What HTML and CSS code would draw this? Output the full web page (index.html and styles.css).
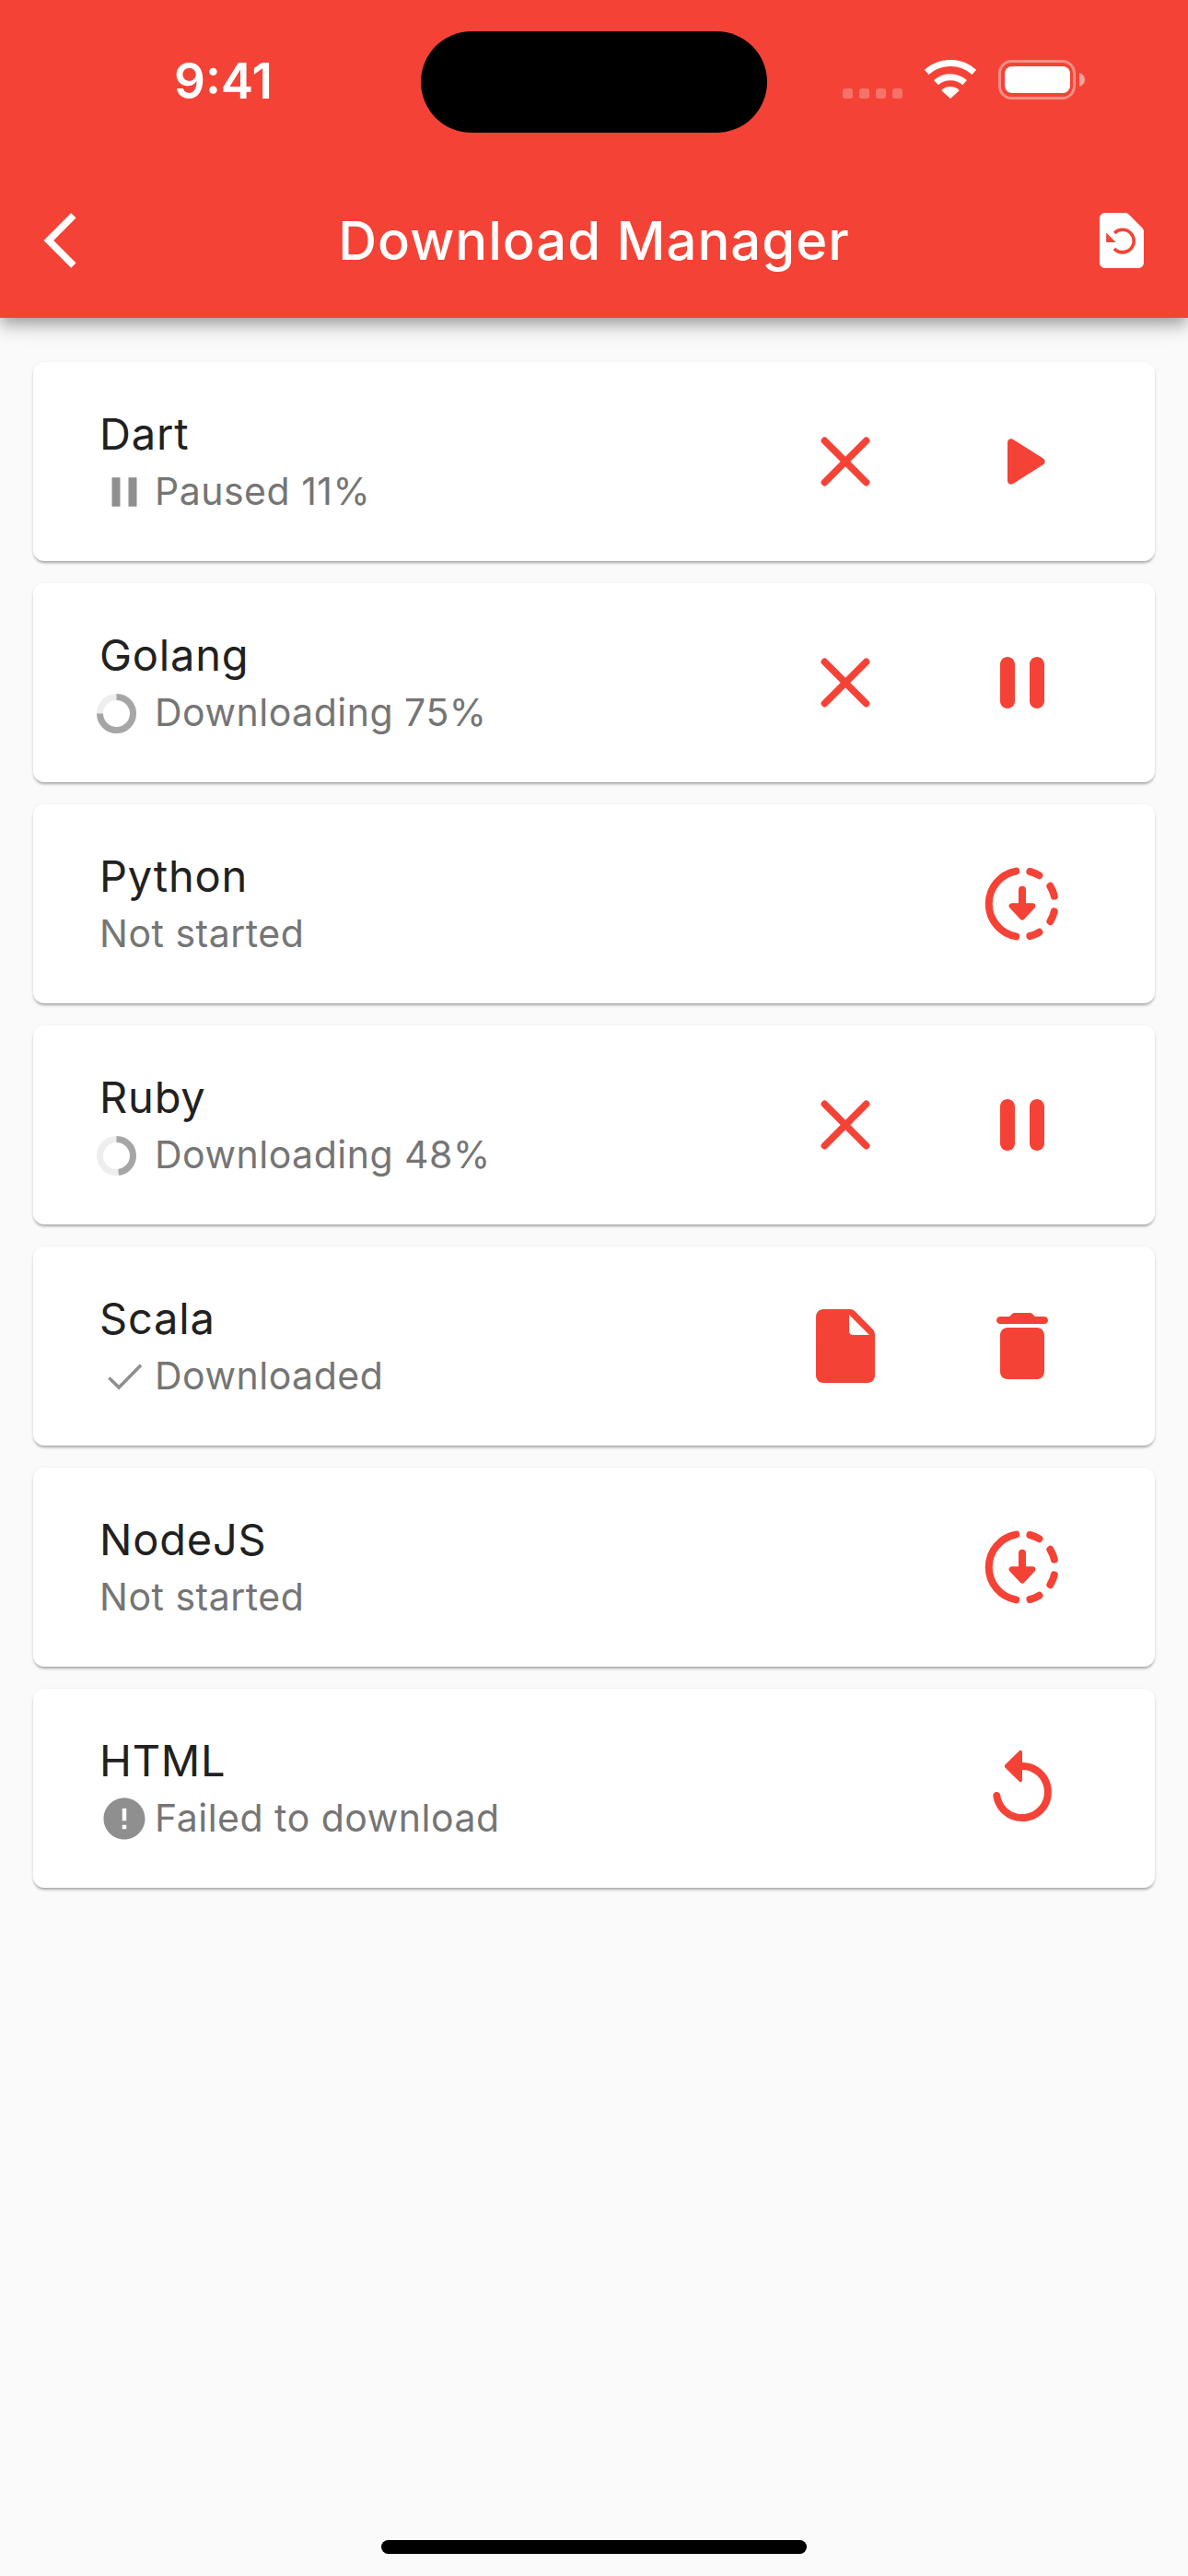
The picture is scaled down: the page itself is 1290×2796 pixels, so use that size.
FILE: index.html
```html
<!DOCTYPE html>
<html lang="en">
<head>
<meta charset="utf-8">
<title>Download Manager</title>
<link rel="stylesheet" href="styles.css">
</head>
<body>
<svg class="sprite" aria-hidden="true">
  <symbol id="i-close" viewBox="0 0 24 24"><path d="M6.35 6.35l11.3 11.3M17.65 6.35L6.35 17.65" fill="none" stroke="currentColor" stroke-width="1.9" stroke-linecap="round"/></symbol>
  <symbol id="i-play" viewBox="0 0 24 24"><path d="M8 6.82v10.36c0 .79.87 1.27 1.54.84l8.14-5.18c.62-.39.62-1.29 0-1.69L9.54 5.98C8.87 5.55 8 6.03 8 6.82z"/></symbol>
  <symbol id="i-pause" viewBox="0 0 24 24"><path d="M8 19c1.1 0 2-.9 2-2V7c0-1.1-.9-2-2-2s-2 .9-2 2v10c0 1.1.9 2 2 2zm6-12v10c0 1.1.9 2 2 2s2-.9 2-2V7c0-1.1-.9-2-2-2s-2 .9-2 2z"/></symbol>
  <symbol id="i-file" viewBox="0 0 24 24"><path d="M6 2c-1.1 0-1.99.9-1.99 2L4 20c0 1.1.89 2 1.99 2H18c1.1 0 2-.9 2-2V8.83c0-.53-.21-1.04-.59-1.41l-4.83-4.83c-.37-.38-.88-.59-1.41-.59H6zm7 6V3.5L18.5 9H14c-.55 0-1-.45-1-1z"/></symbol>
  <symbol id="i-delete" viewBox="0 0 24 24"><path d="M6 19c0 1.1.9 2 2 2h8c1.1 0 2-.9 2-2V9c0-1.1-.9-2-2-2H8c-1.1 0-2 .9-2 2v10zM18 4h-2.5l-.71-.71c-.18-.18-.44-.29-.7-.29H9.91c-.26 0-.52.11-.7.29L8.5 4H6c-.55 0-1 .45-1 1s.45 1 1 1h12c.55 0 1-.45 1-1s-.45-1-1-1z"/></symbol>
  <symbol id="i-replay" viewBox="0 0 24 24"><path d="M12 5V2.21c0-.45-.54-.67-.85-.35l-3.8 3.79c-.2.2-.2.51 0 .71l3.79 3.79c.32.31.86.09.86-.36V7c3.73 0 6.68 3.42 5.86 7.29-.47 2.27-2.31 4.1-4.57 4.57-3.57.75-6.75-1.7-7.23-5.01-.07-.48-.49-.85-.98-.85-.6 0-1.08.53-1 1.13.62 4.39 4.8 7.64 9.53 6.72 3.12-.61 5.63-3.12 6.24-6.24C20.84 9.48 16.94 5 12 5z"/></symbol>
  <symbol id="i-download" viewBox="0 0 24 24">
    <g fill="none" stroke="currentColor" stroke-width="2" stroke-linecap="round">
      <path d="M10.3 3.15A9 9 0 0 0 10.3 20.85"/>
      <path d="M14.1 3.25A9 9 0 0 1 16.6 4.3"/>
      <path d="M19.6 7.2A9 9 0 0 1 20.7 9.9"/>
      <path d="M20.7 14.1A9 9 0 0 1 19.6 16.8"/>
      <path d="M16.6 19.7A9 9 0 0 1 14.1 20.75"/>
      <path d="M12 8.2V13"/>
    </g>
    <path d="M9.2 12.6h5.6L12 15.6z" stroke="currentColor" stroke-width="1.6" stroke-linejoin="round"/>
  </symbol>
  <symbol id="s-pause" viewBox="0 0 24 24"><path d="M6 19h4V5H6v14zm8-14v14h4V5h-4z"/></symbol>
  <symbol id="s-check" viewBox="0 0 24 24"><path d="M4.6 12.7l4.8 4.6L20 6.6" fill="none" stroke="currentColor" stroke-width="1.6"/></symbol>
  <symbol id="s-error" viewBox="0 0 24 24"><path d="M12 2C6.48 2 2 6.48 2 12s4.48 10 10 10 10-4.48 10-10S17.52 2 12 2zm1 11h-2V7h2v6zm0 4h-2v-2h2v2z"/></symbol>
</svg>

<header class="appbar">
  <div class="statusbar">
    <span class="time">9:41</span>
    <div class="status-icons">
      <div class="signal"><i></i><i></i><i></i><i></i></div>
      <svg class="wifi" viewBox="0 0 58 42"><path d="M3.2 13.3A38.6 38.6 0 0 1 54.8 13.3" fill="none" stroke="#fff" stroke-width="7"/><path d="M13.4 24.7A23.3 23.3 0 0 1 44.6 24.7" fill="none" stroke="#fff" stroke-width="7"/><path d="M29 42L19.3 33.3A13 13 0 0 1 38.7 33.3z" fill="#fff"/></svg>
      <svg class="battery" viewBox="0 0 94 43"><rect x="1.5" y="1.5" width="81" height="40" rx="13" fill="none" stroke="#fff" stroke-opacity=".4" stroke-width="3"/><rect x="7" y="7" width="71" height="29" rx="8" fill="#fff"/><path d="M88 14c3.5 1 6 4 6 7.500s-2.500 6.500-6 7.500z" fill="#fff" fill-opacity=".5"/></svg>
    </div>
  </div>
  <nav class="navbar">
    <svg class="nav-icon back" viewBox="0 0 24 24"><path d="M17.51 3.87L15.73 2.1 5.84 12l9.9 9.9 1.77-1.77L9.38 12l8.13-8.13z"/></svg>
    <h1 class="title">Download Manager</h1>
    <svg class="nav-icon" viewBox="0 0 24 24"><path d="M13.17 2c.53 0 1.04.21 1.41.59l4.83 4.83c.38.37.59.88.59 1.41V20c0 1.100-.9 2-2 2H5.990C4.890 22 4 21.100 4 20l.01-16c0-1.100.89-2 1.990-2z"/><path d="M9.400 9.300A4.100 4.100 0 1 1 9.300 15" fill="none" stroke="#f44336" stroke-width="1.200"/><path d="M6.400 9.200l3.500 3.500H6.400z" fill="#f44336"/></svg>
  </nav>
</header>

<main class="list">
  <article class="card">
    <div class="info">
      <div class="name">Dart</div>
      <div class="sub"><span class="cell"><svg class="sicon"><use href="#s-pause"/></svg></span><span>Paused 11%</span></div>
    </div>
    <div class="actions">
      <svg class="action"><use href="#i-close"/></svg>
      <svg class="action"><use href="#i-play"/></svg>
    </div>
  </article>
  <article class="card">
    <div class="info">
      <div class="name">Golang</div>
      <div class="sub"><span class="cell cell-start"><svg class="spinner" viewBox="0 0 43 43"><circle class="track" cx="21.500" cy="21.500" r="18"/><circle class="arc" cx="21.500" cy="21.500" r="18" pathLength="100" stroke-dasharray="75 100"/></svg></span><span>Downloading 75%</span></div>
    </div>
    <div class="actions">
      <svg class="action"><use href="#i-close"/></svg>
      <svg class="action"><use href="#i-pause"/></svg>
    </div>
  </article>
  <article class="card">
    <div class="info">
      <div class="name">Python</div>
      <div class="sub">Not started</div>
    </div>
    <div class="actions">
      <svg class="action"><use href="#i-download"/></svg>
    </div>
  </article>
  <article class="card">
    <div class="info">
      <div class="name">Ruby</div>
      <div class="sub"><span class="cell cell-start"><svg class="spinner" viewBox="0 0 43 43"><circle class="track" cx="21.500" cy="21.500" r="18"/><circle class="arc" cx="21.500" cy="21.500" r="18" pathLength="100" stroke-dasharray="48 100"/></svg></span><span>Downloading 48%</span></div>
    </div>
    <div class="actions">
      <svg class="action"><use href="#i-close"/></svg>
      <svg class="action"><use href="#i-pause"/></svg>
    </div>
  </article>
  <article class="card">
    <div class="info">
      <div class="name">Scala</div>
      <div class="sub"><span class="cell"><svg class="sicon"><use href="#s-check"/></svg></span><span>Downloaded</span></div>
    </div>
    <div class="actions">
      <svg class="action"><use href="#i-file"/></svg>
      <svg class="action"><use href="#i-delete"/></svg>
    </div>
  </article>
  <article class="card">
    <div class="info">
      <div class="name">NodeJS</div>
      <div class="sub">Not started</div>
    </div>
    <div class="actions">
      <svg class="action"><use href="#i-download"/></svg>
    </div>
  </article>
  <article class="card">
    <div class="info">
      <div class="name">HTML</div>
      <div class="sub"><span class="cell"><svg class="sicon"><use href="#s-error"/></svg></span><span>Failed to download</span></div>
    </div>
    <div class="actions">
      <svg class="action"><use href="#i-replay"/></svg>
    </div>
  </article>
</main>
<div class="home-indicator"></div>
</body>
</html>
```
FILE: styles.css
```css
* { box-sizing: border-box; }
html, body { margin: 0; padding: 0; }
body {
  position: relative;
  height: 2796px;
  overflow: hidden;
  background: #fafafa;
  font-family: Inter, "Liberation Sans", sans-serif;
}
.sprite { display: none; }

.appbar {
  position: relative;
  z-index: 1;
  height: 345px;
  background: #f44336;
  color: #fff;
  box-shadow: 0 6px 12px -3px rgba(0,0,0,.2), 0 12px 15px rgba(0,0,0,.14), 0 3px 30px rgba(0,0,0,.12);
}
.appbar::before {
  content: "";
  position: absolute;
  left: 457px;
  top: 34px;
  width: 376px;
  height: 110px;
  border-radius: 55px;
  background: #000;
}
.statusbar {
  height: 177px;
  display: flex;
  justify-content: space-between;
  align-items: flex-start;
  padding: 55px 112px 0 189px;
}
.time { font-size: 53px; line-height: 66px; font-weight: 600; }
.status-icons { display: flex; align-items: flex-end; gap: 23px; margin-top: 10px; height: 43px; }
.signal { display: flex; gap: 7px; padding-bottom: 1px; }
.signal i { width: 11px; height: 11px; border-radius: 3px; background: rgba(255,255,255,.25); }
.wifi { width: 58px; height: 42px; display: block; margin-bottom: 1px; }
.battery { width: 94px; height: 43px; display: block; }

.navbar { height: 168px; display: flex; align-items: center; padding: 0 36px; }
.nav-icon { width: 72px; height: 72px; fill: #fff; flex: none; display: block; }
.back { margin-left: -6px; margin-right: 6px; }
.title { flex: 1; margin: 0; text-align: center; font-size: 58px; line-height: 72px; font-weight: 500; letter-spacing: 1px; }

.list { padding: 48px 36px 0; display: flex; flex-direction: column; gap: 24px; }
.card {
  height: 216px;
  display: flex;
  align-items: center;
  justify-content: space-between;
  padding: 0 96px 0 72px;
  background: #fff;
  border-radius: 12px;
  box-shadow: 0 3px 3px -1px rgba(0,0,0,.3), 0 1px 4px rgba(0,0,0,.08);
}
.info { padding-bottom: 2px; }
.name { font-size: 47px; line-height: 64px; color: #212121; letter-spacing: .8px; }
.sub { display: flex; align-items: center; gap: 3px; margin-top: 2px; height: 56px; font-size: 41px; line-height: 56px; color: #757575; letter-spacing: .5px; }
.cell { width: 60px; margin: 2px 0 0 -3px; display: flex; justify-content: center; align-items: center; flex: none; height: 56px; }
.cell-start { justify-content: flex-start; }
.sicon { width: 54px; height: 54px; fill: #8f8f8f; color: #8f8f8f; display: block; }
.spinner { width: 43px; height: 43px; display: block; }
.spinner circle { fill: none; stroke-width: 7; }
.spinner .track { stroke: #eeeeee; }
.spinner .arc { stroke: #a6a6a6; transform: rotate(-90deg); transform-origin: 50% 50%; }
.actions { display: flex; gap: 96px; color: #f44336; }
.action { width: 96px; height: 96px; fill: currentColor; display: block; }

.home-indicator {
  position: absolute;
  left: 414px;
  top: 2757px;
  width: 462px;
  height: 15px;
  border-radius: 8px;
  background: #000;
}
```
